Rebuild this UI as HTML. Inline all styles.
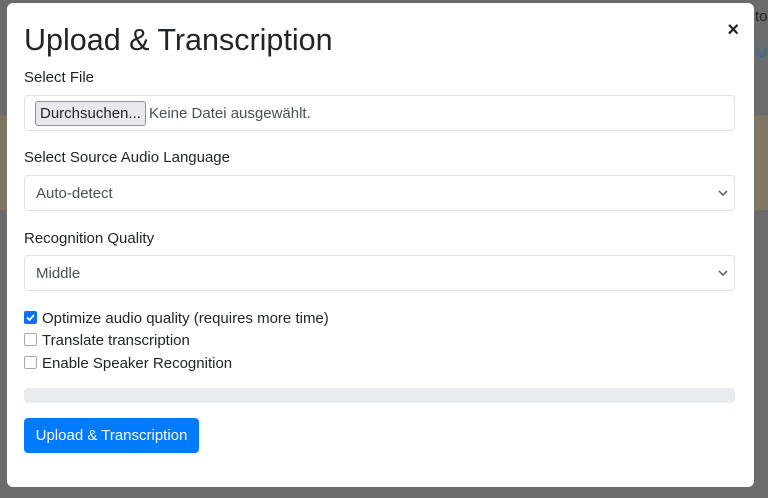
<!DOCTYPE html>
<html><head><style>
*{box-sizing:border-box;margin:0;padding:0}
body{width:768px;height:498px;background:#6b6b6b;font-family:"Liberation Sans",sans-serif;position:relative;overflow:hidden;color:#212529}
.band{position:absolute;background:#7e7662}
.modal{position:absolute;left:7px;top:3px;width:747px;height:484px;background:#fff;border-radius:6px}
.abs{position:absolute}
h1{position:absolute;left:17px;top:20px;font-size:30.5px;font-weight:400;color:#212529}
.lbl{position:absolute;left:17px;font-size:15px}
.box{position:absolute;left:17px;width:711px;height:36px;border:1px solid #dee2e6;border-radius:4px;font-size:15px;color:#495057;padding-left:11px;line-height:35px}
.chev{position:absolute;right:6px;top:13px}
.cb{position:absolute;left:17px;width:13px;height:13px;border:1px solid #aaa;border-radius:2px;background:#fff}
.cl{position:absolute;left:35px;font-size:15px}
</style></head><body>
<div class="band" style="left:0;top:115px;width:7px;height:95px"></div>
<div class="band" style="left:754px;top:115px;width:14px;height:95px"></div>
<div class="abs" style="left:755px;top:8px;font-size:15px;color:#222">to</div>
<div class="abs" style="left:756px;top:44px;font-size:15px;color:#2a6fa8">U</div>
<div class="modal">
<h1>Upload &amp; Transcription</h1>
<div class="abs" style="right:15px;top:16px;font-size:20px;font-weight:700;color:#222">×</div>
<div class="lbl" style="top:66px">Select File</div>
<div class="box" style="top:92px;padding-left:10px">
 <span style="position:absolute;left:10px;top:5px;background:#e9e9ed;border:1px solid #8f8f9d;border-radius:3px;height:25px;line-height:23px;padding:0 4px;color:#222">Durchsuchen...</span><span style="position:absolute;left:124px;top:0">Keine Datei ausgewählt.</span></div>
<div class="lbl" style="top:146px">Select Source Audio Language</div>
<div class="box" style="top:172px">Auto-detect<svg class="chev" width="10" height="8" viewBox="0 0 10 8"><path d="M1 2l4 4 4-4" stroke="#555" stroke-width="1.5" fill="none"/></svg></div>
<div class="lbl" style="top:227px">Recognition Quality</div>
<div class="box" style="top:252px">Middle<svg class="chev" width="10" height="8" viewBox="0 0 10 8"><path d="M1 2l4 4 4-4" stroke="#555" stroke-width="1.5" fill="none"/></svg></div>
<div class="cb" style="top:308px;background:#0d6efd;border-color:#0d6efd"><svg width="11" height="11" viewBox="0 0 11 11" style="position:absolute;left:0;top:0"><path d="M2 5.5l2.5 2.5 4.5-5" stroke="#fff" stroke-width="1.8" fill="none"/></svg></div>
<div class="cl" style="top:307px">Optimize audio quality (requires more time)</div>
<div class="cb" style="top:330px"></div>
<div class="cl" style="top:329px">Translate transcription</div>
<div class="cb" style="top:353px"></div>
<div class="cl" style="top:352px">Enable Speaker Recognition</div>
<div class="abs" style="left:17px;top:385px;width:711px;height:15px;background:#e9ecef;border-radius:4px"></div>
<div class="abs" style="left:17px;top:415px;width:175px;height:35px;background:#007bff;border-radius:4px;color:#fff;font-size:15px;line-height:36px;text-align:center">Upload &amp; Transcription</div>
</div>
</body></html>
